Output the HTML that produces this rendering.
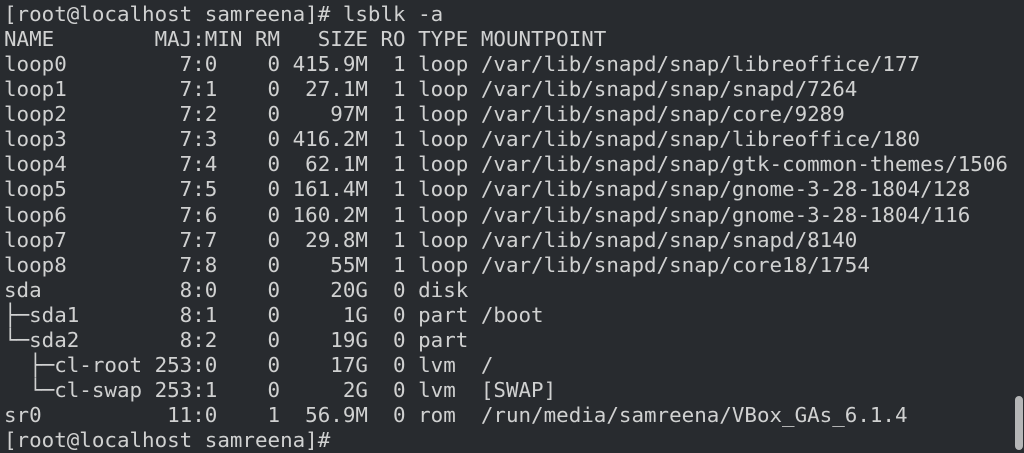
<!DOCTYPE html>
<html><head><style>
body{margin:0;background:#282b2f;width:1024px;height:452px;overflow:hidden}
pre{margin:0;padding:2px 0 0 4px;font-family:"DejaVu Sans Mono","Liberation Mono",monospace;font-size:20.85px;line-height:25.06px;color:#d0d1d1;letter-spacing:0}
.sb{position:absolute;left:1015px;top:396px;width:8px;height:54px;border-radius:4px;background:#b5b6b7}
</style></head><body>
<pre>[root@localhost samreena]# lsblk -a
NAME        MAJ:MIN RM   SIZE RO TYPE MOUNTPOINT
loop0         7:0    0 415.9M  1 loop /var/lib/snapd/snap/libreoffice/177
loop1         7:1    0  27.1M  1 loop /var/lib/snapd/snap/snapd/7264
loop2         7:2    0    97M  1 loop /var/lib/snapd/snap/core/9289
loop3         7:3    0 416.2M  1 loop /var/lib/snapd/snap/libreoffice/180
loop4         7:4    0  62.1M  1 loop /var/lib/snapd/snap/gtk-common-themes/1506
loop5         7:5    0 161.4M  1 loop /var/lib/snapd/snap/gnome-3-28-1804/128
loop6         7:6    0 160.2M  1 loop /var/lib/snapd/snap/gnome-3-28-1804/116
loop7         7:7    0  29.8M  1 loop /var/lib/snapd/snap/snapd/8140
loop8         7:8    0    55M  1 loop /var/lib/snapd/snap/core18/1754
sda           8:0    0    20G  0 disk 
├─sda1        8:1    0     1G  0 part /boot
└─sda2        8:2    0    19G  0 part 
  ├─cl-root 253:0    0    17G  0 lvm  /
  └─cl-swap 253:1    0     2G  0 lvm  [SWAP]
sr0          11:0    1  56.9M  0 rom  /run/media/samreena/VBox_GAs_6.1.4
[root@localhost samreena]# </pre>
<div class="sb"></div>
</body></html>
